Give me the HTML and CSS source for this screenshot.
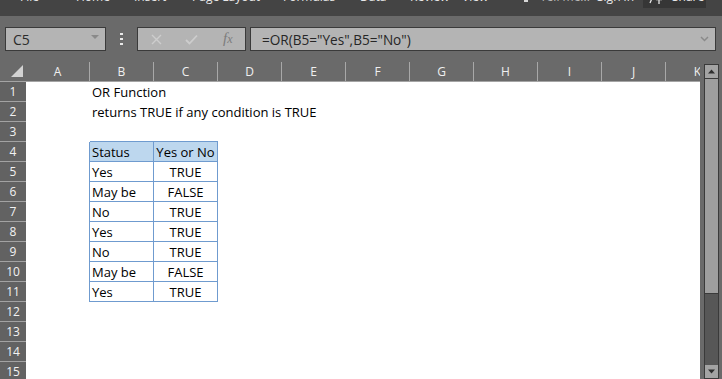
FILE: index.html
```html
<!DOCTYPE html>
<html>
<head>
<meta charset="utf-8">
<link rel="stylesheet" href="styles.css">
</head>
<body>
<div class="ribbon">
  <span class="tab">File</span>
  <span class="tab">Home</span>
  <span class="tab">Insert</span>
  <span class="tab">Page Layout</span>
  <span class="tab">Formulas</span>
  <span class="tab">Data</span>
  <span class="tab">Review</span>
  <span class="tab">View</span>
  <span class="tab bulb"><svg width="6" height="16" viewBox="0 0 6 16"><rect x="1" y="0" width="4" height="2" fill="#d8d8d8"/></svg></span>
  <span class="tab dim">Tell me...</span>
  <span class="tab">Sign in</span>
  <span class="share"><svg class="shareicon" width="14" height="8" viewBox="0 0 14 8"><path d="M2 0 L4 0 L1 7" stroke="#e6e6e6" stroke-width="1.3" fill="none"/><path d="M7 3.5 H13 M10 0 V8" stroke="#e6e6e6" stroke-width="1.3" fill="none"/></svg><span class="tab">Share</span></span>
</div>

<div class="fbar">
  <div class="namebox">
    <span class="nbtext">C5</span>
    <svg class="nbarrow" width="8" height="5" viewBox="0 0 8 5"><path d="M0 0 H8 L4 4 Z" fill="#8a8a8a"/></svg>
  </div>
  <div class="dots">
    <svg width="3" height="12" viewBox="0 0 3 12"><rect x="0" y="0" width="3" height="2" fill="#e8e8e8"/><rect x="0" y="5" width="3" height="2" fill="#e8e8e8"/><rect x="0" y="10" width="3" height="2" fill="#e8e8e8"/></svg>
  </div>
  <div class="btnbox">
    <svg class="ic" width="11" height="11" viewBox="0 0 11 11"><path d="M1 1 L10 10 M10 1 L1 10" stroke="#cdcdcd" stroke-width="1.4"/></svg>
    <svg class="ic" width="13" height="11" viewBox="0 0 13 11"><path d="M1 6 L4.5 9.5 L12 1.5" stroke="#cdcdcd" stroke-width="1.8" fill="none"/></svg>
    <span class="fx"><i>f</i><i class="x">x</i></span>
  </div>
  <div class="formula">
    <span class="ftext">=OR(B5="Yes",B5="No")</span>
    <svg class="chev" width="9" height="6" viewBox="0 0 9 6"><path d="M1 1 L4.5 4.5 L8 1" stroke="#8a8a8a" stroke-width="1.5" fill="none"/></svg>
  </div>
</div>

<div class="main">
  <div class="sheet">
    <div class="colhead">
      <div class="corner"><svg width="26" height="20" viewBox="0 0 26 20"><path d="M23 4 V16 H11 Z" fill="#d2d2d2"/></svg></div>
      <div class="ch">A</div><div class="ch">B</div><div class="ch">C</div><div class="ch">D</div><div class="ch">E</div><div class="ch">F</div><div class="ch">G</div><div class="ch">H</div><div class="ch">I</div><div class="ch">J</div><div class="ch">K</div>
    </div>
    <div class="row"><div class="rh">1</div><div class="c"></div><div class="c txt">OR Function</div></div>
    <div class="row"><div class="rh">2</div><div class="c"></div><div class="c txt">returns TRUE if any condition is TRUE</div></div>
    <div class="row"><div class="rh">3</div><div class="c"></div><div class="c tb"></div><div class="c tb"></div></div>
    <div class="row"><div class="rh">4</div><div class="c tl"></div><div class="c txt tb tr hd">Status</div><div class="c ctr tb tr hd">Yes or No</div></div>
    <div class="row"><div class="rh">5</div><div class="c tl"></div><div class="c txt tb tr">Yes</div><div class="c ctr tb tr">TRUE</div></div>
    <div class="row"><div class="rh">6</div><div class="c tl"></div><div class="c txt tb tr">May be</div><div class="c ctr tb tr">FALSE</div></div>
    <div class="row"><div class="rh">7</div><div class="c tl"></div><div class="c txt tb tr">No</div><div class="c ctr tb tr">TRUE</div></div>
    <div class="row"><div class="rh">8</div><div class="c tl"></div><div class="c txt tb tr">Yes</div><div class="c ctr tb tr">TRUE</div></div>
    <div class="row"><div class="rh">9</div><div class="c tl"></div><div class="c txt tb tr">No</div><div class="c ctr tb tr">TRUE</div></div>
    <div class="row"><div class="rh">10</div><div class="c tl"></div><div class="c txt tb tr">May be</div><div class="c ctr tb tr">FALSE</div></div>
    <div class="row"><div class="rh">11</div><div class="c tl"></div><div class="c txt tb tr">Yes</div><div class="c ctr tb tr">TRUE</div></div>
    <div class="row"><div class="rh">12</div></div>
    <div class="row"><div class="rh">13</div></div>
    <div class="row"><div class="rh">14</div></div>
    <div class="row"><div class="rh">15</div></div>
  </div>
  <div class="vscroll">
    <div class="sbtn"><svg width="13" height="13" viewBox="0 0 13 13"><path d="M3 8.5 H10 L6.5 4.5 Z" fill="#2e2e2e"/></svg></div>
    <div class="thumb"></div>
    <div class="track"></div>
    <div class="sbtn"><svg width="13" height="13" viewBox="0 0 13 13"><path d="M3 4.5 H10 L6.5 8.5 Z" fill="#2e2e2e"/></svg></div>
  </div>
</div>
</body>
</html>
```

FILE: styles.css
```css
html, body {
  margin: 0;
  padding: 0;
}
body {
  width: 722px;
  height: 379px;
  overflow: hidden;
  background: #6a6a6a;
  font-family: "Open Sans", "Noto Sans", sans-serif;
}

/* ribbon (cut off at top) */
.ribbon {
  height: 16px;
  background: #444444;
  overflow: hidden;
  display: grid;
  grid-template-columns: 56px 58px 58px 91px 77px 50px 52px 59px 19px 57px 46px 63px;
  padding-left: 20px;
  box-sizing: border-box;
}
.tab {
  display: block;
  margin-top: -11px;
  font-size: 12px;
  line-height: 16px;
  color: #e8e8e8;
  white-space: nowrap;
}
.tab.dim {
  color: #b8b8b8;
}
.tab.bulb {
  margin-top: 0;
  padding-left: 2px;
}
.share {
  display: flex;
  align-items: flex-start;
  height: 8px;
  background: #363636;
  overflow: hidden;
  padding-left: 6px;
}
.shareicon {
  margin-right: 9px;
  margin-top: -4px;
}
.share .tab {
  margin-top: -11px;
}

/* formula bar */
.fbar {
  height: 45px;
  box-sizing: border-box;
  padding: 11px 6px 0 5px;
  display: flex;
  align-items: flex-start;
}
.namebox, .btnbox, .formula {
  height: 24px;
  box-sizing: border-box;
  background: #b4b4b4;
  border: 1px solid #3a3a3a;
  display: flex;
  align-items: center;
}
.namebox {
  width: 101px;
  padding: 0 6px 0 7px;
  justify-content: space-between;
}
.nbtext {
  font-size: 14px;
  color: #2b2b2b;
}
.nbarrow {
  margin-top: -3px;
}
.dots {
  width: 31px;
  height: 24px;
  display: flex;
  align-items: center;
  justify-content: center;
}
.btnbox {
  width: 109px;
  padding-left: 13px;
}
.btnbox .ic:nth-child(1) {
  margin-right: 23px;
}
.btnbox .ic:nth-child(2) {
  margin-right: 25px;
}
.fx {
  font-family: "Liberation Serif", serif;
  font-size: 15px;
  color: #7c7c7c;
  margin-top: -2px;
}
.fx .x {
  font-size: 12px;
}
.formula {
  flex: 1;
  margin-left: 4px;
  padding: 0 6px 0 11px;
  justify-content: space-between;
}
.ftext {
  font-size: 13.6px;
  color: #262626;
  white-space: nowrap;
}

/* sheet */
.main {
  display: flex;
  height: 318px;
}
.sheet {
  width: 700px;
  overflow: hidden;
  flex: none;
}
.colhead {
  display: flex;
  height: 21px;
  box-sizing: border-box;
  border-bottom: 1px solid #a4a4a4;
  background: #6a6a6a;
}
.corner {
  width: 26px;
  flex: none;
  height: 20px;
}
.ch {
  width: 64px;
  flex: none;
  box-sizing: border-box;
  border-right: 1px solid #a8a8a8;
  margin-top: 1px;
  text-align: center;
  font-size: 12px;
  line-height: 19px;
  color: #f0f0f0;
}
.row {
  display: flex;
  height: 20px;
  background: #ffffff;
}
.rh {
  width: 26px;
  flex: none;
  box-sizing: border-box;
  background: #626262;
  border-bottom: 1px solid #a2a2a2;
  text-align: center;
  font-size: 12px;
  line-height: 20px;
  color: #f2f2f2;
}
.c {
  width: 64px;
  flex: none;
  height: 20px;
  box-sizing: border-box;
  font-size: 13px;
  line-height: 20px;
  color: #000000;
  white-space: nowrap;
}
.c.txt {
  padding-left: 2px;
}
.c.ctr {
  text-align: center;
}
.c.tb {
  border-bottom: 1px solid #6f9bcf;
}
.c.tr {
  border-right: 1px solid #6f9bcf;
}
.c.tl {
  border-right: 1px solid #6f9bcf;
}
.c.hd {
  background: #bdd7ee;
}

/* scrollbar */
.vscroll {
  width: 15px;
  margin-left: 4px;
  margin-top: 3px;
  display: flex;
  flex-direction: column;
  background: #3a3a3a;
  box-sizing: border-box;
  border: 1px solid #3a3a3a;
}
.sbtn {
  height: 13px;
  background: #a3a3a3;
  display: flex;
  align-items: center;
  justify-content: center;
  flex: none;
}
.thumb {
  height: 214px;
  margin-top: 1px;
  background: #9e9e9e;
  flex: none;
}
.track {
  flex: 1;
  margin-top: 1px;
  background: #575757;
}
```
